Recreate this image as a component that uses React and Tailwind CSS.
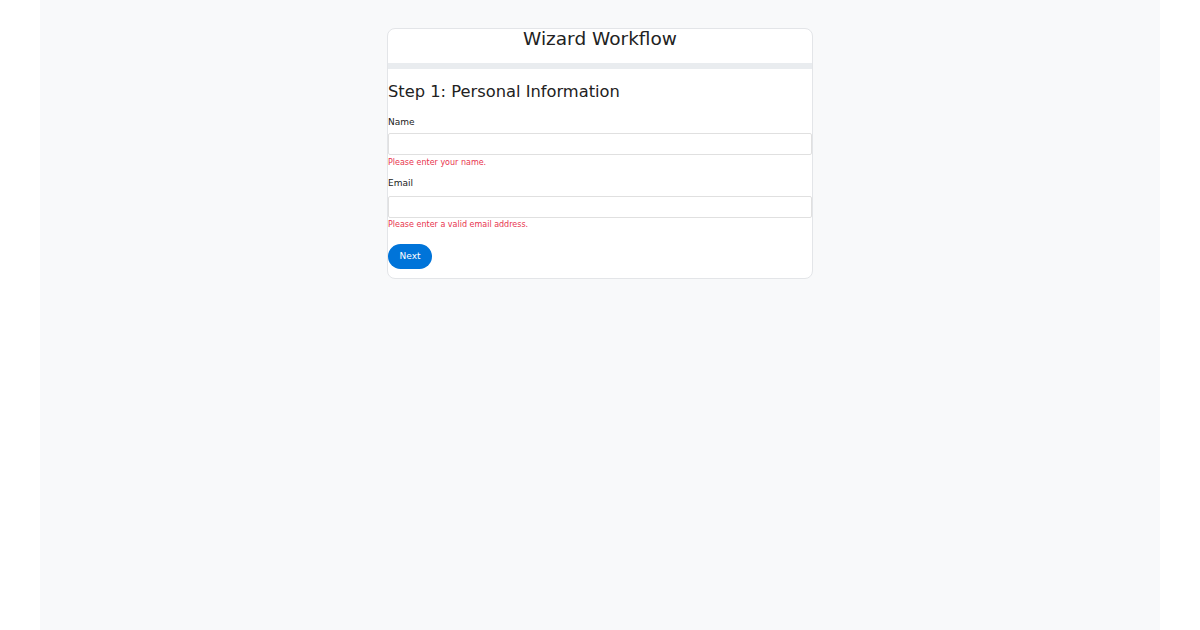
import React, { useState } from 'react';

export default function App() {
  const [name, setName] = useState('');
  const [email, setEmail] = useState('');

  return (
    <div className="min-h-screen bg-white" style={{ fontFamily: '"DejaVu Sans", sans-serif' }}>
      <div className="mx-10 min-h-[630px] bg-[#f8f9fa] pt-7 flex justify-center items-start">
        {/* Wizard card */}
        <div className="w-[426px] bg-white border border-[#e3e5e8] rounded-lg overflow-hidden text-[#222]">
          <h1 className="text-center text-[18.5px] leading-[20px]">Wizard Workflow</h1>

          {/* Progress track */}
          <div className="mt-[14px] h-[6px] bg-[#e9ecef]" />

          <h2 className="mt-[13px] text-[16.3px] leading-[19px]">Step 1: Personal Information</h2>

          <form className="mt-[16px] pb-[9px]" onSubmit={(e) => e.preventDefault()}>
            <label className="block text-[9px] leading-[11px]">Name</label>
            <input
              value={name}
              onChange={(e) => setName(e.target.value)}
              className="mt-[5px] block w-full h-[22px] border border-[#e0e0e0] rounded-[2px] outline-none"
            />
            <p className="mt-[3px] text-[8px] leading-[10px] text-[#e8344e]">Please enter your name.</p>

            <label className="mt-[10px] block text-[9px] leading-[11px]">Email</label>
            <input
              value={email}
              onChange={(e) => setEmail(e.target.value)}
              className="mt-[7px] block w-full h-[22px] border border-[#e0e0e0] rounded-[2px] outline-none"
            />
            <p className="mt-[2px] text-[8px] leading-[10px] text-[#e8344e]">Please enter a valid email address.</p>

            <button className="mt-[14px] block h-[25px] w-[44px] rounded-full bg-[#0074d9] text-white text-[9px]">
              Next
            </button>
          </form>
        </div>
      </div>
    </div>
  );
}
